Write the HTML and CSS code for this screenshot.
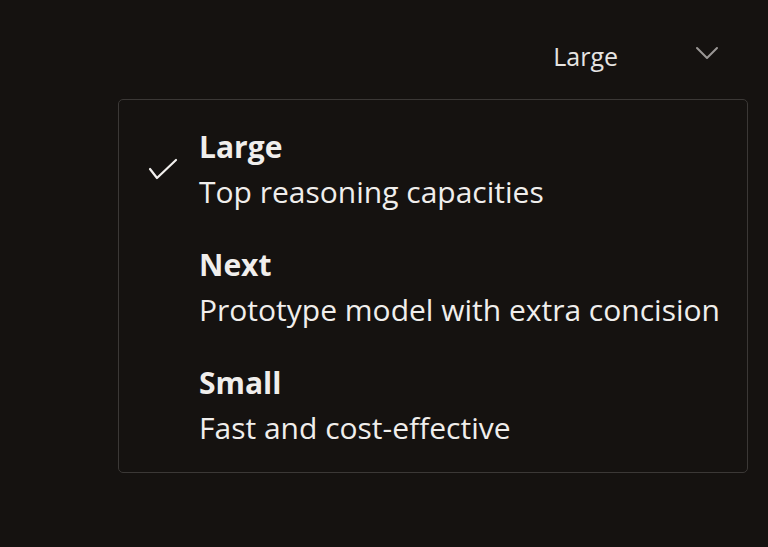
FILE: index.html
```html
<!DOCTYPE html>
<html>
<head>
<meta charset="utf-8">
<link rel="stylesheet" href="styles.css">
</head>
<body>
<div class="page">
  <div class="trigger">
    <span class="trigger-label">Large</span>
    <svg class="chevron" width="24" height="14" viewBox="0 0 24 14"><path d="M2 2 L12 12 L22 2" fill="none" stroke="#9a9795" stroke-width="2" stroke-linecap="round" stroke-linejoin="round"/></svg>
  </div>
  <div class="menu">
    <div class="item">
      <div class="check">
        <svg width="30" height="22" viewBox="0 0 30 22"><path d="M2 11 L9 20 L28 2" fill="none" stroke="#f2f0ee" stroke-width="2.2" stroke-linecap="round" stroke-linejoin="round"/></svg>
      </div>
      <div class="text">
        <div class="title">Large</div>
        <div class="desc">Top reasoning capacities</div>
      </div>
    </div>
    <div class="item">
      <div class="check"></div>
      <div class="text">
        <div class="title">Next</div>
        <div class="desc">Prototype model with extra concision</div>
      </div>
    </div>
    <div class="item">
      <div class="check"></div>
      <div class="text">
        <div class="title">Small</div>
        <div class="desc">Fast and cost-effective</div>
      </div>
    </div>
  </div>
</div>
</body>
</html>
```
FILE: styles.css
```css
html, body {
  margin: 0;
  padding: 0;
  background: #151210;
  width: 768px;
  height: 547px;
  overflow: hidden;
  font-family: "Open Sans", "Noto Sans", sans-serif;
  color: #f0eeec;
}
.page {
  display: flex;
  flex-direction: column;
  align-items: flex-end;
  padding: 34px 20px 0 118px;
}
.trigger {
  display: flex;
  align-items: center;
  gap: 77px;
  height: 44px;
  padding-right: 29px;
}
.trigger-label {
  font-size: 25px;
  color: #e6e4e2;
}
.chevron {
  display: block;
  margin-top: -6px;
}
.menu {
  margin-top: 21px;
  width: 630px;
  box-sizing: border-box;
  border: 1px solid #3b3836;
  border-radius: 5px;
  padding: 24px 0 22px 0;
  display: flex;
  flex-direction: column;
  gap: 28px;
}
.item {
  display: flex;
  align-items: center;
}
.check {
  width: 80px;
  flex: none;
  padding-left: 29px;
  box-sizing: border-box;
}
.check svg { display: block; }
.text {
  display: flex;
  flex-direction: column;
}
.title {
  font-size: 30px;
  font-weight: 700;
  line-height: 45px;
}
.desc {
  font-size: 30px;
  line-height: 45px;
}
```
